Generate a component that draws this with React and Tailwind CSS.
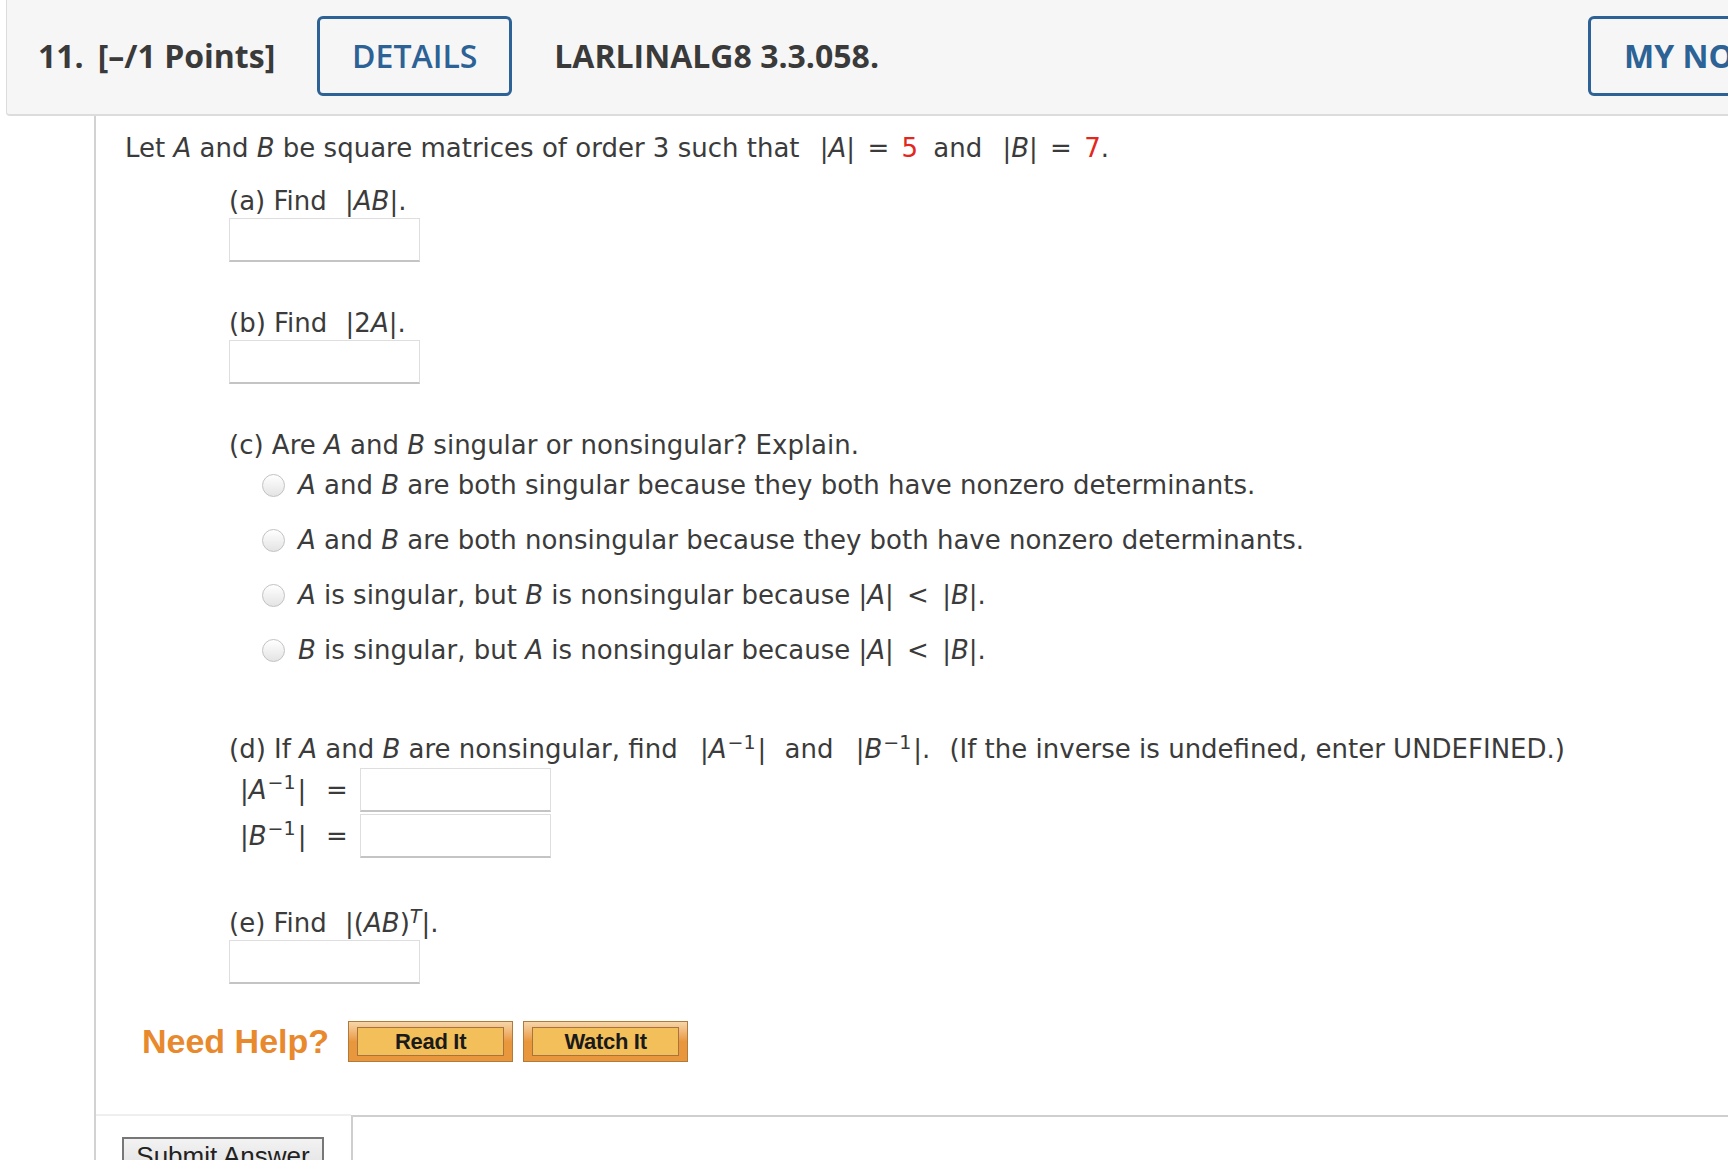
import React from "react";

const body = { fontFamily: '"DejaVu Sans", Verdana, sans-serif' };
const head = { fontFamily: '"Open Sans", Arial, sans-serif' };
const arial = { fontFamily: '"Liberation Sans", Arial, sans-serif' };

function V({ children }) {
  return <i className="italic">{children}</i>;
}

function Inv({ children }) {
  return (
    <>
      |<V>{children}</V>
      <sup className="ml-[1px] mr-[2px] text-[19px]">−1</sup>|
    </>
  );
}

function Answer({ className = "" }) {
  return (
    <input
      type="text"
      className={`block h-[44px] w-[191px] border border-[#dedede] border-b-2 border-b-[#c4c4c4] bg-white outline-none ${className}`}
    />
  );
}

function Radio({ children }) {
  return (
    <label className="flex h-[34px] items-center">
      <span className="mr-[13px] h-[23px] w-[23px] shrink-0 rounded-full border border-[#c2c2c2] bg-gradient-to-b from-white to-[#e4e4e4]" />
      <span>{children}</span>
    </label>
  );
}

function HelpButton({ label }) {
  return (
    <button
      type="button"
      className="flex h-[41px] w-[165px] flex-col border border-[#b07a3c] bg-gradient-to-b from-[#f6d6a8] via-[#e9973c] to-[#e9973c] px-[8px] pt-[5px] pb-[5px]"
      style={arial}
    >
      <span className="flex h-full w-full items-center justify-center border border-[#a8733c] bg-[#f2bf5b] text-[22px] font-bold tracking-[-0.3px] text-[#1a1a1a]">
        {label}
      </span>
    </button>
  );
}

export default function App() {
  return (
    <div className="h-[1160px] w-[1728px] overflow-hidden bg-white text-[#3b3b3b]">
      {/* Question header */}
      <div
        className="ml-[6px] flex h-[116px] items-center rounded-bl-[4px] border-b-2 border-l border-[#dcdcdc] bg-[#f6f6f6] pb-[2px]"
        style={head}
      >
        <span className="ml-[31px] text-[32px] font-bold text-[#3a3a3a]">11.</span>
        <span className="ml-[14px] text-[32px] font-bold text-[#3a3a3a]">[–/1 Points]</span>
        <button
          type="button"
          className="ml-[42px] flex h-[80px] w-[195px] items-center justify-center rounded-[6px] border-[3px] border-[#2c6295] text-[32px] font-semibold text-[#2c6295]"
        >
          DETAILS
        </button>
        <span className="ml-[42px] text-[32px] font-bold text-[#3a3a3a]">LARLINALG8 3.3.058.</span>
        <button
          type="button"
          className="ml-auto mr-[-80px] flex h-[80px] w-[220px] shrink-0 items-center overflow-hidden rounded-[6px] border-[3px] border-[#2c6295] pl-[33px] text-[32px] font-bold text-[#2c6295]"
        >
          MY NO
        </button>
      </div>

      {/* Question body */}
      <div className="ml-[94px] flex h-[1044px] flex-col border-l-2 border-[#d2d2d2]" style={body}>
        <div className="pl-[29px] pt-[14px] text-[26px]">
          <p className="leading-[36px]">
            Let <V>A</V> and <V>B</V> be square matrices of order 3 such that{" "}
            <span className="ml-[12px]">|<V>A</V>|</span> <span className="mx-[4px]">=</span>{" "}
            <span className="text-[#e3271d]">5</span> <span className="ml-[7px]">and</span>{" "}
            <span className="ml-[12px]">|<V>B</V>|</span> <span className="mx-[4px]">=</span>{" "}
            <span className="text-[#e3271d]">7</span>.
          </p>

          <div className="ml-[104px]">
            <p className="mt-[18px] leading-[34px]">
              (a) Find <span className="ml-[10px]">|<V>AB</V>|.</span>
            </p>
            <Answer />

            <p className="mt-[44px] leading-[34px]">
              (b) Find <span className="ml-[10px]">|2<V>A</V>|.</span>
            </p>
            <Answer />

            <p className="mt-[44px] leading-[34px]">
              (c) Are <V>A</V> and <V>B</V> singular or nonsingular? Explain.
            </p>
            <div className="ml-[33px] mt-[6px] flex flex-col gap-[21px]">
              <Radio>
                <V>A</V> and <V>B</V> are both singular because they both have nonzero determinants.
              </Radio>
              <Radio>
                <V>A</V> and <V>B</V> are both nonsingular because they both have nonzero determinants.
              </Radio>
              <Radio>
                <V>A</V> is singular, but <V>B</V> is nonsingular because |<V>A</V>|{" "}
                <span className="mx-[5px]">&lt;</span> |<V>B</V>|.
              </Radio>
              <Radio>
                <V>B</V> is singular, but <V>A</V> is nonsingular because |<V>A</V>|{" "}
                <span className="mx-[5px]">&lt;</span> |<V>B</V>|.
              </Radio>
            </div>

            <p className="mt-[65px] leading-[34px]">
              (d) If <V>A</V> and <V>B</V> are nonsingular, find{" "}
              <span className="ml-[14px]">
                <Inv>A</Inv>
              </span>{" "}
              <span className="mx-[10px]">and</span>{" "}
              <span className="ml-[4px]">
                <Inv>B</Inv>.
              </span>
              <span className="ml-[19px]">(If the inverse is undefined, enter UNDEFINED.)</span>
            </p>
            <div className="mt-[2px] flex flex-col gap-[2px]">
              <div className="flex items-center">
                <span className="ml-[11px] w-[86px]">
                  <Inv>A</Inv>
                </span>
                <span className="w-[34px]">=</span>
                <Answer className="w-[190px]" />
              </div>
              <div className="flex items-center">
                <span className="ml-[11px] w-[86px]">
                  <Inv>B</Inv>
                </span>
                <span className="w-[34px]">=</span>
                <Answer className="w-[190px]" />
              </div>
            </div>

            <p className="mt-[48px] leading-[34px]">
              (e) Find{" "}
              <span className="ml-[10px]">
                |(<V>AB</V>)<sup className="text-[19px] italic">T</sup>|.
              </span>
            </p>
            <Answer />
          </div>

          <div className="mt-[32px] flex items-center">
            <span className="ml-[17px] mr-[19px] text-[34px] font-bold text-[#e8892e]" style={arial}>
              Need Help?
            </span>
            <HelpButton label="Read It" />
            <span className="w-[10px]" />
            <HelpButton label="Watch It" />
          </div>
        </div>

        {/* Submit bar */}
        <div className="mt-[47px] flex flex-1">
          <div className="w-[255px] border-t-2 border-[#efefef] pl-[26px] pt-[21px]">
            <div
              className="h-[44px] w-[202px] border-2 border-[#777777] bg-gradient-to-b from-[#f2f2f2] to-[#dedede] pt-[3px] text-center text-[26px] leading-[28px] text-[#222]"
              style={arial}
            >
              Submit Answer
            </div>
          </div>
          <div className="mt-[1px] flex-1 border-l-2 border-t-2 border-[#cfcfcf]" />
        </div>
      </div>
    </div>
  );
}
